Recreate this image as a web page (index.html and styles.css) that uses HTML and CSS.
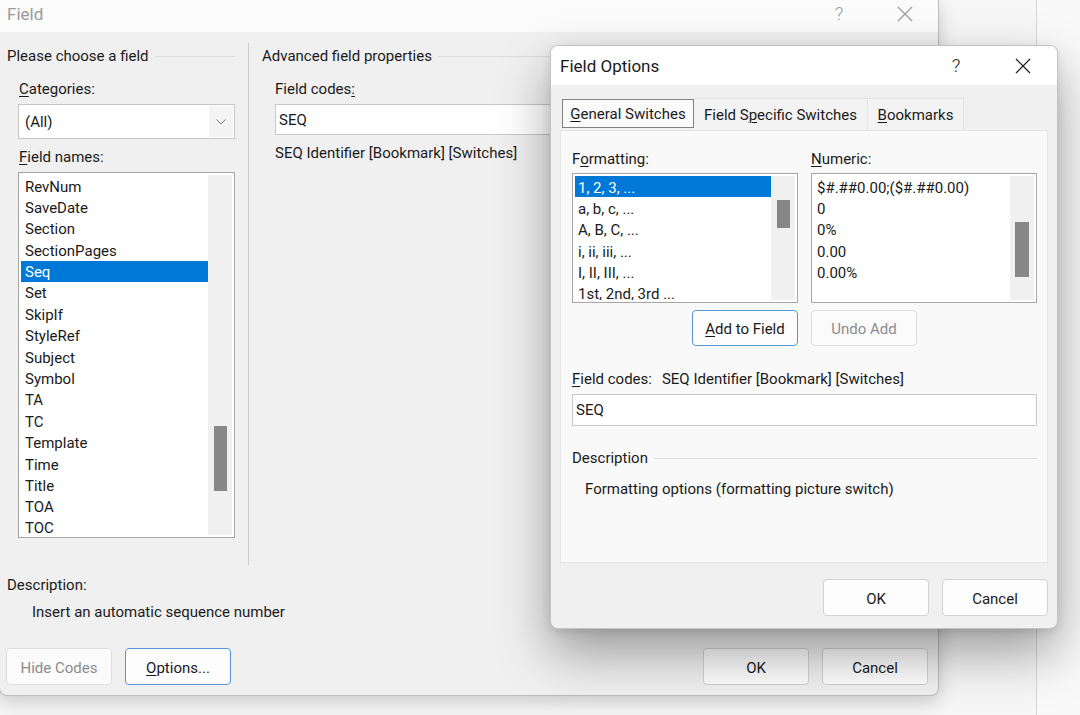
FILE: index.html
```html
<!DOCTYPE html>
<html lang="en">
<head>
<meta charset="utf-8">
<title>Field</title>
<link rel="stylesheet" href="styles.css">
</head>
<body>
<section class="dlg main-dlg">
  <header class="titlebar main-titlebar">
    <span class="tb-title">Field</span>
    <span class="tb-help">?</span>
    <span class="tb-close"><svg width="16" height="16" viewBox="0 0 16 16"><path d="M1 1L15 15M15 1L1 15" /></svg></span>
  </header>
  <div class="main-body">
    <div class="main-cols">
      <div class="col-left">
        <div class="group-head"><span>Please choose a field</span><i class="rule"></i></div>
        <div class="field-label"><u>C</u>ategories:</div>
        <div class="combo">
          <span class="combo-val">(All)</span>
          <span class="combo-btn"><svg width="10" height="6" viewBox="0 0 10 6"><polyline points="0.5,0.5 5,5 9.5,0.5" /></svg></span>
        </div>
        <div class="field-label"><u>F</u>ield names:</div>
        <div class="listbox names-list">
          <div class="list-items">
            <div class="list-item">RevNum</div>
            <div class="list-item">SaveDate</div>
            <div class="list-item">Section</div>
            <div class="list-item">SectionPages</div>
            <div class="list-item sel">Seq</div>
            <div class="list-item">Set</div>
            <div class="list-item">SkipIf</div>
            <div class="list-item">StyleRef</div>
            <div class="list-item">Subject</div>
            <div class="list-item">Symbol</div>
            <div class="list-item">TA</div>
            <div class="list-item">TC</div>
            <div class="list-item">Template</div>
            <div class="list-item">Time</div>
            <div class="list-item">Title</div>
            <div class="list-item">TOA</div>
            <div class="list-item last">TOC</div>
          </div>
          <div class="scroll names-scroll"><div class="thumb"></div></div>
        </div>
      </div>
      <div class="col-right">
        <div class="group-head"><span>Advanced field properties</span><i class="rule"></i></div>
        <div class="field-label right-label">Field codes<u>:</u></div>
        <div class="textbox main-code">SEQ</div>
        <div class="syntax">SEQ Identifier [Bookmark] [Switches]</div>
      </div>
    </div>
    <div class="desc-label">Description:</div>
    <div class="desc-text">Insert an automatic sequence number</div>
    <div class="btn-row">
      <div class="btn-group">
        <button class="btn disabled">Hide Codes</button>
        <button class="btn focus"><u>O</u>ptions...</button>
      </div>
      <div class="btn-group">
        <button class="btn">OK</button>
        <button class="btn">Cancel</button>
      </div>
    </div>
  </div>
</section>

<section class="dlg opts-dlg">
  <header class="titlebar opts-titlebar">
    <span class="tb-title">Field Options</span>
    <span class="tb-help">?</span>
    <span class="tb-close"><svg width="16" height="16" viewBox="0 0 16 16"><path d="M1 1L15 15M15 1L1 15" /></svg></span>
  </header>
  <div class="opts-body">
    <div class="tabs">
      <div class="tab active tab-general"><u>G</u>eneral Switches</div>
      <div class="tab tab-specific">Field S<u>p</u>ecific Switches</div>
      <div class="tab tab-bookmarks"><u>B</u>ookmarks</div>
    </div>
    <div class="tab-panel">
      <div class="two-col labels-row">
        <div>F<u>o</u>rmatting:</div>
        <div><u>N</u>umeric:</div>
      </div>
      <div class="two-col lists-row">
        <div class="listbox small-list">
          <div class="list-items">
            <div class="list-item sel">1, 2, 3, ...</div>
            <div class="list-item">a, b, c, ...</div>
            <div class="list-item">A, B, C, ...</div>
            <div class="list-item">i, ii, iii, ...</div>
            <div class="list-item">I, II, III, ...</div>
            <div class="list-item last">1st, 2nd, 3rd ...</div>
          </div>
          <div class="scroll fmt-scroll"><div class="thumb"></div></div>
        </div>
        <div class="listbox small-list">
          <div class="list-items">
            <div class="list-item">$#.##0.00;($#.##0.00)</div>
            <div class="list-item">0</div>
            <div class="list-item">0%</div>
            <div class="list-item">0.00</div>
            <div class="list-item">0.00%</div>
          </div>
          <div class="scroll num-scroll"><div class="thumb"></div></div>
        </div>
      </div>
      <div class="two-col add-row">
        <button class="btn focus add-btn"><u>A</u>dd to Field</button>
        <button class="btn disabled">Undo Add</button>
      </div>
      <div class="codes-row">
        <span><u>F</u>ield codes:</span>
        <span class="codes-syntax">SEQ Identifier [Bookmark] [Switches]</span>
      </div>
      <div class="textbox opts-code">SEQ</div>
      <div class="group-head desc-head"><span>Description</span><i class="rule"></i></div>
      <div class="opts-desc">Formatting options (formatting picture switch)</div>
    </div>
    <div class="opts-buttons">
      <button class="btn">OK</button>
      <button class="btn">Cancel</button>
    </div>
  </div>
</section>
</body>
</html>
```

FILE: styles.css
```css
* { box-sizing: border-box; }

html, body { margin: 0; padding: 0; }

body {
  width: 1080px;
  height: 715px;
  overflow: hidden;
  position: relative;
  font-family: Roboto, "Noto Sans", "Liberation Sans", sans-serif;
  font-size: 15px;
  line-height: 20px;
  color: #1a1a1a;
  background: linear-gradient(to right, #f6f6f6 0, #f6f6f6 1036px, #d8d8d8 1036px, #d8d8d8 1037px, #f9f9f9 1037px);
}

u { text-decoration: underline; text-underline-offset: 2px; text-decoration-thickness: 1px; }

.dlg {
  position: absolute;
  background: #f0f0f0;
  display: flex;
  flex-direction: column;
}

/* ---------- title bars ---------- */
.titlebar {
  display: flex;
  align-items: center;
  background: #fbfbfb;
  flex: none;
}
.tb-title { flex: 1; font-size: 17px; }
.tb-help {
  width: 66px;
  text-align: center;
  font-size: 19px;
  font-weight: 300;
}
.tb-close {
  width: 66px;
  display: flex;
  justify-content: center;
  align-items: center;
}
.tb-close svg path { stroke: #1a1a1a; stroke-width: 1.2; fill: none; }

/* ---------- main Field dialog ---------- */
.main-dlg {
  left: -1px;
  top: 0;
  width: 940px;
  border: 1px solid #bdbdbd;
  border-top: none;
  border-radius: 0 0 8px 8px;
  box-shadow: 0 6px 18px rgba(0, 0, 0, 0.18);
}
.main-titlebar { height: 32px; padding: 0 0 4px 7px; }
.main-titlebar .tb-title { color: #9a9a9a; }
.main-titlebar .tb-help { color: #9a9a9a; }
.main-titlebar .tb-close svg path { stroke: #9a9a9a; }

.main-body {
  display: flex;
  flex-direction: column;
  padding-bottom: 10px;
}
.main-cols {
  display: flex;
  margin-top: 11px;
  height: 522px;
}
.col-left {
  width: 249px;
  padding: 3px 13px 0 7px;
  border-right: 1px solid #cdcdcd;
  display: flex;
  flex-direction: column;
}
.col-right {
  flex: 1;
  padding: 3px 13px 0 13px;
  display: flex;
  flex-direction: column;
}

.group-head {
  display: flex;
  align-items: center;
  gap: 6px;
}
.rule { flex: 1; height: 1px; background: #dddddd; }

.field-label { margin-top: 13px; padding-left: 12px; }
.right-label { padding-left: 13px; }

.combo {
  margin: 5px 0 0 11px;
  height: 35px;
  border: 1px solid #c6c6c6;
  background: #fff;
  display: flex;
}
.combo-val { flex: 1; padding: 1px 0 0 6px; line-height: 33px; }
.combo-btn {
  width: 24px;
  margin: 1px 1px 1px 0;
  background: #f4f4f4;
  display: flex;
  align-items: center;
  justify-content: center;
}
.combo-btn polyline { fill: none; stroke: #777; stroke-width: 1; }
.combo + .field-label { margin-top: 8px; }

.listbox {
  border: 1px solid #a6a6a6;
  background: #fff;
  padding: 2px;
  display: flex;
}
.list-items { flex: 1; overflow: hidden; min-width: 0; }
.list-item {
  height: 21.4px;
  line-height: 21.4px;
  padding: 1.5px 0 0 4px;
  white-space: nowrap;
}
.list-item.sel { background: #0078d7; color: #fff; }
.list-item.last { height: 19px; line-height: 19px; padding-top: 2px; }
.scroll { width: 24px; background: #f0f0f0; flex: none; }
.thumb { background: #878787; }

.names-list { margin: 5px 0 0 11px; height: 366px; }
.names-scroll { padding: 251px 0 0 6px; }
.names-scroll .thumb { width: 13px; height: 65px; }

.textbox {
  background: #fff;
  border: 1px solid #c9c9c9;
  padding: 1px 0 0 3px;
}
.main-code { margin: 5px 0 0 13px; height: 31px; line-height: 28px; }
.syntax { margin-top: 8px; padding-left: 13px; }

.desc-label { margin-top: 10px; padding-left: 7px; }
.desc-text { margin-top: 7px; padding-left: 32px; }

.btn-row {
  margin-top: 26px;
  display: flex;
  justify-content: space-between;
  padding: 0 10px 0 6px;
}
.btn-group { display: flex; gap: 13px; }

.btn {
  width: 106px;
  height: 37px;
  padding: 2px 0 0;
  border: 1px solid #d2d2d2;
  border-radius: 4px;
  background: #fdfdfd;
  font: inherit;
  color: inherit;
}
.btn.disabled { color: #8c8c8c; border-color: #dedede; background: #fbfbfb; }
.btn.focus { border-color: #5596d8; }

/* ---------- Field Options dialog ---------- */
.opts-dlg {
  left: 550px;
  top: 45px;
  width: 508px;
  border: 1px solid #c2c2c2;
  border-radius: 8px;
  overflow: hidden;
  box-shadow: 0 24px 52px rgba(0, 0, 0, 0.36), 0 3px 10px rgba(0, 0, 0, 0.10);
}
.opts-titlebar { height: 39px; padding-left: 9px; background: #ffffff; }
.opts-titlebar .tb-close { width: 68px; }

.opts-body { padding: 13px 9px 12px 9px; display: flex; flex-direction: column; }

.tabs { display: flex; margin-left: 2px; height: 32px; }
.tab {
  text-align: center;
  height: 32px;
  line-height: 33px;
  background: #f3f3f3;
  border: 1px solid #e3e3e3;
  border-bottom: none;
  border-left: none;
}
.tab.active {
  height: 29px;
  margin-top: 1px;
  line-height: 29px;
  background: #fafafa;
  border: 1px solid #808080;
}
.tab-general { width: 132px; }
.tab-specific { width: 174px; }
.tab-bookmarks { width: 96px; }

.tab-panel {
  height: 433px;
  border: 1px solid #e4e4e4;
  background: #f9f9f9;
  padding: 0 10px 0 11px;
  display: flex;
  flex-direction: column;
}
.two-col {
  display: grid;
  grid-template-columns: 226px 226px;
  column-gap: 13px;
}
.labels-row { margin-top: 18px; }
.lists-row { margin-top: 4px; }
.small-list { height: 130px; }
.small-list .list-item { padding-left: 3px; }
.fmt-scroll { padding: 24px 0 0 6px; }
.fmt-scroll .thumb { width: 13px; height: 28px; }
.num-scroll { padding: 46px 0 0 5px; }
.num-scroll .thumb { width: 14px; height: 55px; }

.add-row { margin-top: 7px; }
.add-row .btn { height: 36px; }
.add-btn { justify-self: end; }

.codes-row { margin-top: 23px; display: flex; gap: 10px; }
.opts-code { margin-top: 5px; width: 465px; height: 32px; line-height: 29px; }
.desc-head { margin-top: 22px; width: 465px; }
.opts-desc { margin-top: 11px; padding-left: 13px; }

.opts-buttons {
  margin-top: 16px;
  display: flex;
  justify-content: flex-end;
  gap: 13px;
}
```
